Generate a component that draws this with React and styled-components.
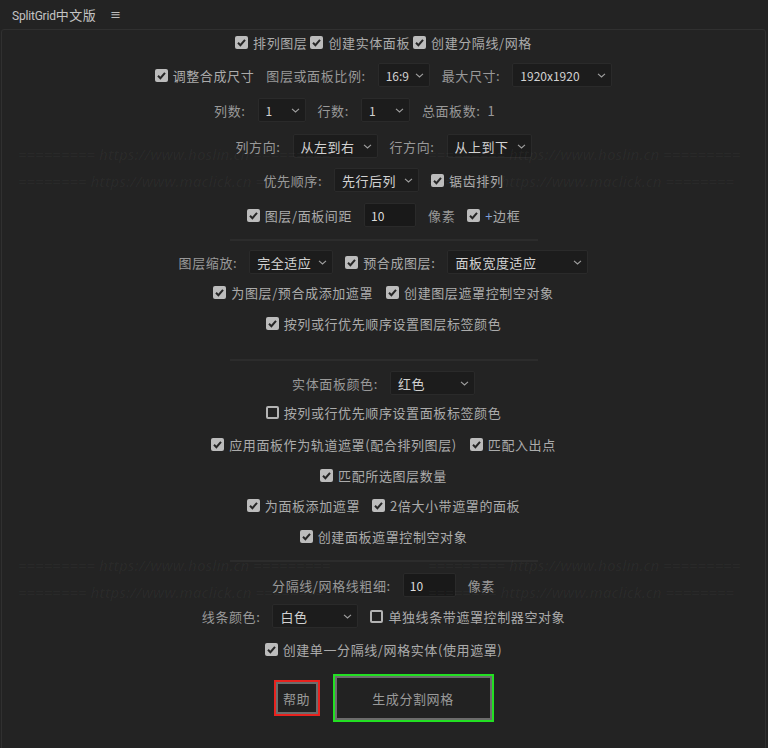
import React from "react";
import styled, { createGlobalStyle } from "styled-components";

const GlobalStyle = createGlobalStyle`
  html, body { margin: 0; padding: 0; background: #232323; }
  body { font-family: "Noto Sans CJK SC", "Noto Sans", sans-serif; color: #a8a8a8; }
  * { box-sizing: border-box; }
`;

const Page = styled.div`
  position: relative;
  width: 768px;
  height: 748px;
  overflow: hidden;
  background: #232323;
`;

const TitleBar = styled.div`
  height: 29px;
  display: flex;
  align-items: center;
  padding-left: 12px;
  gap: 14px;
  color: #c4c4c4;
  font-size: 13px;
`;

const TitleText = styled.span`
  display: inline-flex;
  align-items: baseline;
  letter-spacing: 0.5px;
`;

const Latin = styled.span`
  font-family: Roboto, "Noto Sans", sans-serif;
  font-size: 12px;
  letter-spacing: -0.2px;
`;

const Menu = styled.span`
  font-family: "DejaVu Sans", sans-serif;
  font-size: 13px;
  color: #bdbdbd;
`;

const Panel = styled.div`
  margin: 0 2px 0 1px;
  height: 740px;
  border: 1px solid #303030;
  border-radius: 3px;
  display: flex;
  flex-direction: column;
`;

const Row = styled.div`
  display: flex;
  justify-content: center;
  align-items: center;
  height: 24px;
  margin-top: ${(p) => p.$mt || 0}px;
  gap: ${(p) => (p.$gap === undefined ? 12 : p.$gap)}px;
  font-size: 13px;
  letter-spacing: 0.6px;
`;

const Divider = styled.div`
  align-self: center;
  width: 308px;
  height: 2px;
  background: #2c2c2c;
  margin-top: ${(p) => p.$mt || 0}px;
  flex-shrink: 0;
`;

const Text = styled.span`
  color: #999999;
  white-space: nowrap;
  min-width: ${(p) => (p.$w ? `${p.$w}px` : "auto")};
`;

const CheckItem = styled.label`
  display: inline-flex;
  align-items: center;
  gap: 5px;
  color: #ababab;
  white-space: nowrap;
`;

const Box = styled.span`
  width: 13px;
  height: 13px;
  border-radius: 2px;
  flex-shrink: 0;
  display: inline-flex;
  align-items: center;
  justify-content: center;
  background: ${(p) => (p.$on ? "#bcbcbc" : "transparent")};
  border: ${(p) => (p.$on ? "none" : "2px solid #b4b4b4")};
`;

const Plus = styled.span`
  color: #7f9fd6;
`;

const SelectBox = styled.div`
  width: ${(p) => p.$w}px;
  flex-shrink: 0;
  height: 24px;
  display: flex;
  align-items: center;
  justify-content: space-between;
  padding: 0 5px 0 7px;
  background: #1c1c1c;
  border: 1px solid #2a2a2a;
  border-radius: 2px;
  color: #d2d2d2;
  font-size: ${(p) => p.$fs || 13}px;
  letter-spacing: ${(p) => (p.$fs === 12 ? 0 : 0.5)}px;
  white-space: nowrap;

  svg {
    flex-shrink: 0;
  }
`;

const InputBox = styled.div`
  width: ${(p) => p.$w}px;
  flex-shrink: 0;
  height: 24px;
  display: flex;
  align-items: center;
  padding: 0 6px;
  background: #191919;
  border: 1px solid #2a2a2a;
  border-radius: 2px;
  color: #dcdcdc;
  font-size: 12px;
  letter-spacing: 0;
`;

const ButtonRow = styled.div`
  display: flex;
  justify-content: center;
  align-items: center;
  gap: 13px;
  margin-top: ${(p) => p.$mt}px;
`;

const OuterFrame = styled.div`
  border: 2px solid ${(p) => p.$color};
  width: ${(p) => p.$w}px;
  height: ${(p) => p.$h}px;
  flex-shrink: 0;
`;

const Button = styled.button`
  width: 100%;
  height: 100%;
  border: 2px solid #6c6c6c;
  background: #222222;
  color: #9a9a9a;
  font-family: "Noto Sans CJK SC", sans-serif;
  font-size: 13px;
  letter-spacing: 0.6px;
  padding: 0;
  display: flex;
  align-items: center;
  justify-content: center;
`;

const Watermarks = styled.div`
  position: absolute;
  inset: 0;
  pointer-events: none;
  z-index: 5;
`;

const WatermarkBlock = styled.div`
  position: absolute;
  left: 18px;
  top: ${(p) => p.$top}px;
  display: flex;
  flex-direction: column;
`;

const WatermarkLine = styled.div`
  display: flex;
  height: 27px;
  align-items: center;
`;

const WatermarkText = styled.span`
  width: 410px;
  font-family: "Open Sans", sans-serif;
  font-style: italic;
  font-weight: 600;
  font-size: 15px;
  color: rgba(255, 255, 255, 0.035);
  white-space: nowrap;
`;

const Chevron = () => (
  <svg width="9" height="5" viewBox="0 0 9 5">
    <path d="M1 0.8 L4.5 4 L8 0.8" stroke="#a0a0a0" strokeWidth="1.1" fill="none" />
  </svg>
);

const Check = ({ on = true, children }) => (
  <CheckItem>
    <Box $on={on}>
      {on && (
        <svg width="11" height="11" viewBox="0 0 11 11">
          <path d="M2 5.8 L4.4 8.2 L9 2.8" stroke="#262626" strokeWidth="2" fill="none" />
        </svg>
      )}
    </Box>
    <span>{children}</span>
  </CheckItem>
);

const Select = ({ w, fs, children }) => (
  <SelectBox $w={w} $fs={fs}>
    <span>{children}</span>
    <Chevron />
  </SelectBox>
);

const wm1 = "========= https://www.hoslin.cn =========";
const wm2 = "======== https://www.maclick.cn ========";

const Watermark = ({ top }) => (
  <WatermarkBlock $top={top}>
    <WatermarkLine>
      <WatermarkText>{wm1}</WatermarkText>
      <WatermarkText>{wm1}</WatermarkText>
    </WatermarkLine>
    <WatermarkLine>
      <WatermarkText>{wm2}</WatermarkText>
      <WatermarkText>{wm2}</WatermarkText>
    </WatermarkLine>
  </WatermarkBlock>
);

export default function App() {
  return (
    <>
      <GlobalStyle />
      <Page>
        <TitleBar>
          <TitleText>
            <Latin>SplitGrid</Latin>中文版
          </TitleText>
          <Menu>≡</Menu>
        </TitleBar>
        <Panel>
          <Row $mt={0} $gap={3}>
            <Check>排列图层</Check>
            <Check>创建实体面板</Check>
            <Check>创建分隔线/网格</Check>
          </Row>
          <Row $mt={9}>
            <Check>调整合成尺寸</Check>
            <Text>图层或面板比例:</Text>
            <Select w={52} fs={12}>16:9</Select>
            <Text>最大尺寸:</Text>
            <Select w={100} fs={12}>1920x1920</Select>
          </Row>
          <Row $mt={11}>
            <Text>列数:</Text>
            <Select w={48} fs={12}>1</Select>
            <Text>行数:</Text>
            <Select w={49} fs={12}>1</Select>
            <Text $w={131}>总面板数:&nbsp; 1</Text>
          </Row>
          <Row $mt={12}>
            <Text>列方向:</Text>
            <Select w={85}>从左到右</Select>
            <Text>行方向:</Text>
            <Select w={85}>从上到下</Select>
          </Row>
          <Row $mt={10}>
            <Text>优先顺序:</Text>
            <Select w={85}>先行后列</Select>
            <Check>锯齿排列</Check>
          </Row>
          <Row $mt={11}>
            <Check>图层/面板间距</Check>
            <InputBox $w={52}>10</InputBox>
            <Text>像素</Text>
            <Check>
              <Plus>+</Plus>边框
            </Check>
          </Row>
          <Divider $mt={12} />
          <Row $mt={9}>
            <Text>图层缩放:</Text>
            <Select w={84}>完全适应</Select>
            <Check>预合成图层:</Check>
            <Select w={141}>面板宽度适应</Select>
          </Row>
          <Row $mt={6} $gap={13}>
            <Check>为图层/预合成添加遮罩</Check>
            <Check>创建图层遮罩控制空对象</Check>
          </Row>
          <Row $mt={7}>
            <Check>按列或行优先顺序设置图层标签颜色</Check>
          </Row>
          <Divider $mt={24} />
          <Row $mt={10}>
            <Text>实体面板颜色:</Text>
            <Select w={85}>红色</Select>
          </Row>
          <Row $mt={5}>
            <Check on={false}>按列或行优先顺序设置面板标签颜色</Check>
          </Row>
          <Row $mt={8} $gap={13}>
            <Check>应用面板作为轨道遮罩(配合排列图层)</Check>
            <Check>匹配入出点</Check>
          </Row>
          <Row $mt={7}>
            <Check>匹配所选图层数量</Check>
          </Row>
          <Row $mt={6}>
            <Check>为面板添加遮罩</Check>
            <Check>2倍大小带遮罩的面板</Check>
          </Row>
          <Row $mt={7}>
            <Check>创建面板遮罩控制空对象</Check>
          </Row>
          <Divider $mt={12} />
          <Row $mt={11}>
            <Text>分隔线/网格线粗细:</Text>
            <InputBox $w={53}>10</InputBox>
            <Text>像素</Text>
          </Row>
          <Row $mt={7}>
            <Text>线条颜色:</Text>
            <Select w={86}>白色</Select>
            <Check on={false}>单独线条带遮罩控制器空对象</Check>
          </Row>
          <Row $mt={9}>
            <Check>创建单一分隔线/网格实体(使用遮罩)</Check>
          </Row>
          <ButtonRow $mt={13}>
            <OuterFrame $color="#e8221e" $w={46} $h={36}>
              <Button>帮助</Button>
            </OuterFrame>
            <OuterFrame $color="#22e022" $w={161} $h={48}>
              <Button>生成分割网格</Button>
            </OuterFrame>
          </ButtonRow>
        </Panel>
        <Watermarks>
          <Watermark top={140} />
          <Watermark top={551} />
        </Watermarks>
      </Page>
    </>
  );
}
